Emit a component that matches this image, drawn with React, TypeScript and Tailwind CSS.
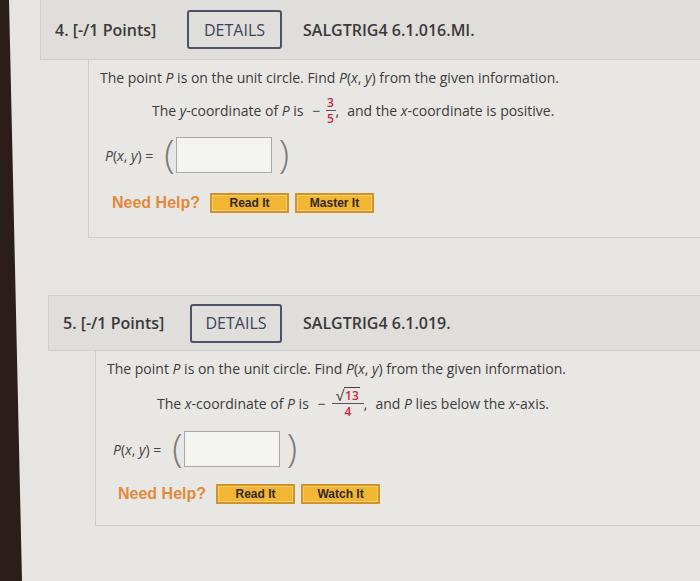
import React from "react";

const sans = "font-['Open_Sans',_'Noto_Sans',sans-serif]";
const arial = "font-['Liberation_Sans',Arial,sans-serif]";

function Header({
  num,
  code,
  labelW,
  detailsW,
  className,
}: {
  num: string;
  code: string;
  labelW: string;
  detailsW: string;
  className: string;
}) {
  return (
    <div
      className={`flex items-center border-l border-b border-[#cfcecb] bg-[#dfdedb] pl-[14px] text-[16px] font-semibold text-[#3a3a3a] ${sans} ${className}`}
    >
      <span className={`${labelW} whitespace-nowrap`}>{num}. [-/1 Points]</span>
      <span
        className={`flex h-[39px] ${detailsW} items-center justify-center rounded-[3px] border-2 border-[#4d5268] text-[16px] font-normal text-[#3d4259]`}
      >
        DETAILS
      </span>
      <span className="ml-[21px] whitespace-nowrap">{code}</span>
    </div>
  );
}

function Answer() {
  return (
    <div className={`flex items-center ${sans} text-[14px] text-[#444]`}>
      <span className="mr-[11px] whitespace-nowrap">
        <i>P</i>(<i>x</i>, <i>y</i>) =
      </span>
      <span className="text-[38px] font-light leading-none text-[#7a7a7a] -mt-[5px]">(</span>
      <span className="mx-[1px] h-[36px] w-[96px] border border-[#a9a9a6] bg-[#f3f3f1]" />
      <span className="ml-[6px] text-[38px] font-light leading-none text-[#7a7a7a] -mt-[5px]">)</span>
    </div>
  );
}

function Help({ second }: { second: string }) {
  return (
    <div className={`flex items-center ${arial}`}>
      <span className="mr-[10px] text-[16px] font-bold text-[#e3893c]">Need Help?</span>
      <button className="flex h-[20px] w-[79px] items-center justify-center border-2 border-[#d2922a] bg-[#f2b534] text-[12px] font-bold text-[#2f2a1e] shadow-[inset_0_0_0_1px_#f8cf6a]">
        Read It
      </button>
      <button className="ml-[6px] flex h-[20px] w-[79px] items-center justify-center border-2 border-[#d2922a] bg-[#f2b534] text-[12px] font-bold text-[#2f2a1e] shadow-[inset_0_0_0_1px_#f8cf6a]">
        {second}
      </button>
    </div>
  );
}

export default function App() {
  return (
    <div className="flex h-[581px] w-[700px] overflow-hidden bg-[#e6e5e1]">
      <div className="h-full w-[22px] shrink-0 bg-[#2a1d1a] [clip-path:polygon(0_0,9px_0,22px_100%,0_100%)]" />
      <div className="flex min-w-0 flex-1 flex-col">
        {/* Question 4 */}
        <Header
          num="4"
          code="SALGTRIG4 6.1.016.MI."
          labelW="w-[132px]"
          detailsW="w-[95px]"
          className="ml-[18px] h-[60px]"
        />
        <div className="ml-[66px] h-[178px] border-l border-b border-[#cfcecb] bg-[#e8e7e4] pl-[11px]">
          <p className={`${sans} mt-[7px] text-[14px] text-[#3c3c3c]`}>
            The point <i>P</i> is on the unit circle. Find <i>P</i>(<i>x</i>, <i>y</i>) from the given information.
          </p>
          <div className={`${sans} mt-[7px] ml-[52px] flex items-center text-[14px] text-[#3c3c3c]`}>
            <span>
              The <i>y</i>-coordinate of <i>P</i> is
            </span>
            <span className="ml-[9px] mr-[5px]">−</span>
            <span className="flex flex-col items-center text-[12px] font-semibold leading-[15px] text-[#c8283c]">
              <span>3</span>
              <span className="h-px w-[10px] bg-[#555]" />
              <span>5</span>
            </span>
            <span>,</span>
            <span className="ml-[8px]">
              and the <i>x</i>-coordinate is positive.
            </span>
          </div>
          <div className="mt-[11px] ml-[5px]">
            <Answer />
          </div>
          <div className="mt-[18px] ml-[12px]">
            <Help second="Master It" />
          </div>
        </div>

        {/* Question 5 */}
        <Header
          num="5"
          code="SALGTRIG4 6.1.019."
          labelW="w-[127px]"
          detailsW="w-[92px]"
          className="mt-[57px] ml-[26px] h-[56px] border-t"
        />
        <div className="ml-[73px] h-[175px] border-l border-b border-[#cfcecb] bg-[#e8e7e4] pl-[11px]">
          <p className={`${sans} mt-[7px] text-[14px] text-[#3c3c3c]`}>
            The point <i>P</i> is on the unit circle. Find <i>P</i>(<i>x</i>, <i>y</i>) from the given information.
          </p>
          <div className={`${sans} mt-[8px] ml-[50px] flex items-center text-[14px] text-[#3c3c3c]`}>
            <span>
              The <i>x</i>-coordinate of <i>P</i> is
            </span>
            <span className="ml-[9px] mr-[6px]">−</span>
            <span className="flex flex-col items-center text-[12px] font-semibold leading-[15px] text-[#c8283c]">
              <span className="flex items-end">
                <span className="text-[15px] font-normal leading-[15px] text-[#444]">√</span>
                <span className="border-t border-[#444] px-[1px]">13</span>
              </span>
              <span className="h-px w-[32px] bg-[#555]" />
              <span>4</span>
            </span>
            <span>,</span>
            <span className="ml-[8px]">
              and <i>P</i> lies below the <i>x</i>-axis.
            </span>
          </div>
          <div className="mt-[12px] ml-[6px]">
            <Answer />
          </div>
          <div className="mt-[15px] ml-[11px]">
            <Help second="Watch It" />
          </div>
        </div>
      </div>
    </div>
  );
}
